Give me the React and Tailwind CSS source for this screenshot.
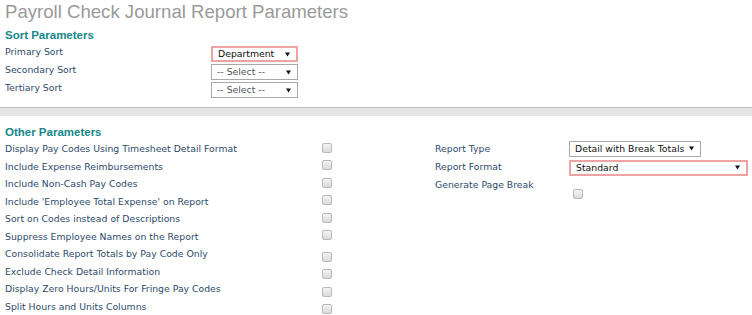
import React from "react";

const labelFont = { fontFamily: "'DejaVu Sans', Verdana, sans-serif" };

const leftOptions = [
  "Display Pay Codes Using Timesheet Detail Format",
  "Include Expense Reimbursements",
  "Include Non-Cash Pay Codes",
  "Include 'Employee Total Expense' on Report",
  "Sort on Codes instead of Descriptions",
  "Suppress Employee Names on the Report",
  "Consolidate Report Totals by Pay Code Only",
  "Exclude Check Detail Information",
  "Display Zero Hours/Units For Fringe Pay Codes",
  "Split Hours and Units Columns",
];

const Arrow = () => (
  <svg width="5" height="5" viewBox="0 0 5 5" className="shrink-0">
    <polygon points="0,0.5 5,0.5 2.5,4.5" fill="#111" />
  </svg>
);

const Select = ({ value, width, invalid, muted }) => (
  <div
    className={`flex h-[16px] items-center justify-between bg-white pl-[5px] pr-[6px] ${
      invalid ? "border-2 border-[#eea3a3]" : "border border-[#a9a9a9]"
    } ${width}`}
  >
    <span
      className={`text-[9.3px] leading-none ${muted ? "text-[#555]" : "text-[#111]"}`}
      style={labelFont}
    >
      {value}
    </span>
    <Arrow />
  </div>
);

const Checkbox = ({ className = "" }) => (
  <div
    className={`h-[10px] w-[10px] rounded-[2px] border border-[#b9b9b9] bg-gradient-to-b from-[#f4f4f4] to-[#dadada] ${className}`}
  />
);

const Label = ({ children, className = "" }) => (
  <span
    className={`block text-[9.3px] leading-[14px] text-[#2d4a6b] whitespace-nowrap ${className}`}
    style={labelFont}
  >
    {children}
  </span>
);

export default function App() {
  return (
    <div className="h-[315px] w-[752px] overflow-hidden bg-white">
      <div className="pl-[5px]">
        <h1
          className="h-[23px] text-[18.6px] leading-[23px] text-[#9a9a9a] mb-[2px]"
          style={{ fontFamily: "'Liberation Sans', Arial, sans-serif" }}
        >
          Payroll Check Journal Report Parameters
        </h1>
        <h2
          className="h-[20px] text-[11.5px] font-bold leading-[20px] text-[#16878a]"
          style={{ fontFamily: "'Liberation Sans', Arial, sans-serif" }}
        >
          Sort Parameters
        </h2>
        <div className="flex flex-col">
          {[
            { label: "Primary Sort", value: "Department", invalid: true },
            { label: "Secondary Sort", value: "-- Select --", muted: true },
            { label: "Tertiary Sort", value: "-- Select --", muted: true },
          ].map((row) => (
            <div key={row.label} className="flex h-[18px] items-start">
              <div className="w-[206px]">
                <Label>{row.label}</Label>
              </div>
              <div className="mt-[1px]">
                <Select
                  value={row.value}
                  width="w-[87px]"
                  invalid={row.invalid}
                  muted={row.muted}
                />
              </div>
            </div>
          ))}
        </div>
      </div>

      <div className="mt-[8px] h-[9px] border-t border-[#bdbdbd] bg-[#e5e5e5]" />

      <div className="pl-[5px]">
        <h2
          className="mt-[7.5px] h-[17px] text-[11.5px] font-bold leading-[17px] text-[#16878a]"
          style={{ fontFamily: "'Liberation Sans', Arial, sans-serif" }}
        >
          Other Parameters
        </h2>
        <div className="flex">
          <div className="flex w-[430px] flex-col">
            {leftOptions.map((opt, i) => (
              <div key={opt} className="flex h-[17.5px] items-center">
                <div className="w-[316.5px]">
                  <Label>{opt}</Label>
                </div>
                <Checkbox className={i < 6 ? "mb-[3.5px]" : "mt-[5px]"} />
              </div>
            ))}
          </div>
          <div className="flex flex-1 flex-col">
            <div className="flex h-[17.5px] items-center">
              <div className="w-[134px]">
                <Label>Report Type</Label>
              </div>
              <div className="mt-[-1px]">
                <Select value="Detail with Break Totals" width="w-[132px]" />
              </div>
            </div>
            <div className="flex h-[17.5px] items-center">
              <div className="w-[134px]">
                <Label>Report Format</Label>
              </div>
              <div className="mt-[2px]">
                <Select value="Standard" width="w-[179px]" invalid />
              </div>
            </div>
            <div className="flex h-[17.5px] items-start">
              <div className="w-[134px] pt-[2px]">
                <Label>Generate Page Break</Label>
              </div>
              <Checkbox className="ml-[4px] mt-[13px]" />
            </div>
          </div>
        </div>
      </div>
    </div>
  );
}
